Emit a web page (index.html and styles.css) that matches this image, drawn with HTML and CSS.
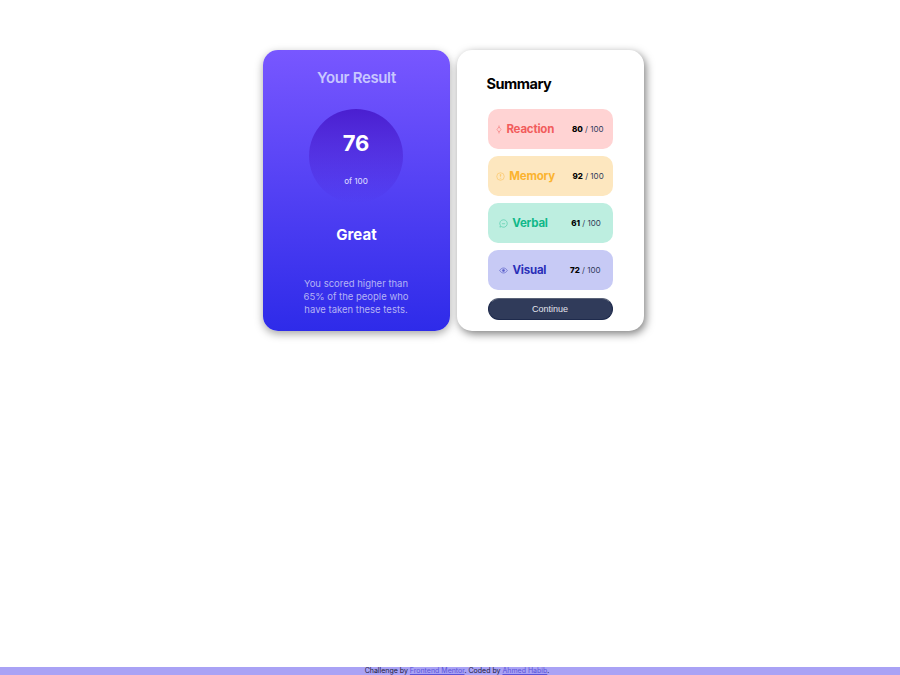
FILE: index.html
```html
<!DOCTYPE html>
<html lang="en">
<head>
<meta charset="utf-8">
<title>Results summary</title>
<link rel="stylesheet" href="styles.css">
</head>
<body>
<main class="main">
  <section class="result">
    <h1 class="result-title">Your Result</h1>
    <div class="circle">
      <span class="score">76</span>
      <span class="of">of 100</span>
    </div>
    <h2 class="grade">Great</h2>
    <p class="desc">You scored higher than 65% of the people who have taken these tests.</p>
  </section>
  <section class="summary">
    <h2 class="summary-title">Summary</h2>
    <div class="row row-red">
      <div class="label">
        <svg class="icon icon-thin" viewBox="0 0 12 20" fill="none" stroke="currentColor" stroke-width="1.4"><path d="M6 1V6M6 14V19M6 4 10.5 10 6 16 1.5 10Z"/></svg>
        <span>Reaction</span>
      </div>
      <div class="val"><b>80</b> / 100</div>
    </div>
    <div class="row row-yellow">
      <div class="label">
        <svg class="icon" viewBox="0 0 20 20" fill="none" stroke="currentColor" stroke-width="1.3"><circle cx="10" cy="10" r="8.3"/><path d="M10 4.5V11M8 7h4M8.5 14h3"/></svg>
        <span>Memory</span>
      </div>
      <div class="val"><b>92</b> / 100</div>
    </div>
    <div class="row row-green">
      <div class="label">
        <svg class="icon" viewBox="0 0 20 20" fill="none" stroke="currentColor" stroke-width="1.3"><path d="M10 1.7a8.3 8.3 0 1 1-4.6 15.2L2 18l1.1-3.4A8.3 8.3 0 0 1 10 1.7Z"/><path d="M6.5 10.5h7"/></svg>
        <span>Verbal</span>
      </div>
      <div class="val"><b>61</b> / 100</div>
    </div>
    <div class="row row-blue">
      <div class="label">
        <svg class="icon" viewBox="0 0 20 20" fill="none" stroke="currentColor" stroke-width="1.5"><path d="M1.5 10C4 6 7 4.5 10 4.5S16 6 18.5 10C16 14 13 15.5 10 15.5S4 14 1.5 10Z"/><circle cx="10" cy="10" r="2.4" fill="currentColor"/></svg>
        <span>Visual</span>
      </div>
      <div class="val"><b>72</b> / 100</div>
    </div>
    <button class="continue" type="button">Continue</button>
  </section>
</main>
<footer class="attribution">Challenge by <a href="#">Frontend Mentor</a>. Coded by <a href="#">Ahmed Habib</a>.</footer>
</body>
</html>
```
FILE: styles.css
```css
* { box-sizing: border-box; }
html, body { height: 100%; }
body {
  margin: 0;
  background: #fff;
  font-family: "Inter", "Liberation Sans", sans-serif;
  display: flex;
  flex-direction: column;
  min-height: 675px;
}
.main {
  flex: 1;
  display: flex;
  justify-content: center;
  align-items: flex-start;
  gap: 7px;
  padding: 50px 0 0 6px;
}
.result {
  width: 187px;
  height: 281px;
  border-radius: 15px;
  background: linear-gradient(180deg, #7857ff 0%, #2e2be9 100%);
  box-shadow: 0 3px 8px rgba(0,0,0,.35);
  display: flex;
  flex-direction: column;
  align-items: center;
  padding-top: 19px;
}
.result-title {
  margin: 0 0 0 1px;
  font-size: 15px;
  line-height: 18px;
  font-weight: 600;
  letter-spacing: -.35px;
  color: #c8c7ff;
}
.circle {
  margin-top: 22px;
  width: 94px;
  height: 94px;
  border-radius: 50%;
  background: linear-gradient(180deg, #4a1fd0 0%, rgba(74,31,208,0) 100%);
  display: flex;
  flex-direction: column;
  align-items: center;
  color: #fff;
}
.score {
  margin-top: 20px;
  font-size: 22px;
  line-height: 28px;
  font-weight: 700;
}
.of {
  margin-top: 19px;
  font-size: 8px;
  line-height: 10px;
  font-weight: 500;
  color: #d5d3ff;
}
.grade {
  margin: 23px 0 0 1px;
  font-size: 15px;
  line-height: 18px;
  font-weight: 700;
  color: #fff;
}
.desc {
  margin: 33px 0 0;
  width: 116px;
  text-align: center;
  font-size: 9.5px;
  line-height: 13px;
  color: #b4b3f5;
}
.summary {
  width: 187px;
  height: 281px;
  border-radius: 15px;
  background: #fff;
  box-shadow: 2px 3px 8px rgba(0,0,0,.5);
  padding: 25px 31px 0;
  display: flex;
  flex-direction: column;
}
.summary-title {
  margin: 0 0 16px -1px;
  font-size: 14.5px;
  line-height: 18px;
  font-weight: 700;
  letter-spacing: -.5px;
  color: #000;
}
.row {
  width: 125px;
  height: 40px;
  flex: none;
  border-radius: 10px;
  display: flex;
  align-items: center;
  justify-content: space-around;
  margin-bottom: 7px;
}
.label {
  display: flex;
  align-items: center;
  gap: 4px;
  font-size: 11.5px;
  font-weight: 700;
  letter-spacing: -.2px;
}
.icon { width: 9px; height: 9px; flex: none; opacity: .7; }
.icon-thin { width: 6px; }
.val {
  font-size: 8px;
  color: #303b5a;
}
.val b { color: #000; font-weight: 800; }
.row-red { background: #ffd3d3; color: #f25c5c; }
.row-yellow { background: #fde7bf; color: #fbb32f; }
.row-green { background: #bdeee0; color: #10b889; }
.row-blue { background: #c7caf5; color: #2a2fb8; }
.continue {
  width: 125px;
  height: 22px;
  flex: none;
  margin-top: 1px;
  border: 1px solid #1e2a4c;
  border-top-color: #5a6378;
  border-radius: 11px;
  background: #303b5a;
  color: #e4e6ee;
  font-family: "Liberation Sans", sans-serif;
  font-size: 9px;
  padding: 0;
}
.attribution {
  height: 8px;
  flex: none;
  background: #a9a2f5;
  text-align: center;
  padding-left: 14px;
  font-size: 7px;
  line-height: 8px;
  color: #1a1a3a;
  overflow: hidden;
}
.attribution a { color: #5a53d8; }
```
